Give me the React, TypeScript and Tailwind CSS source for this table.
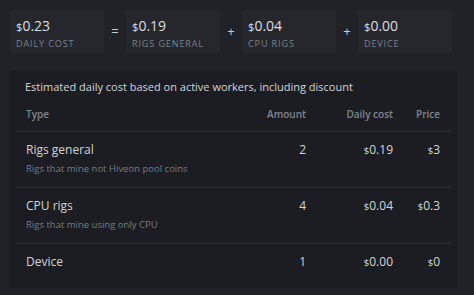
import React from 'react';

const font = { fontFamily: '"Open Sans", "Liberation Sans", sans-serif' };

const Money = ({ value }: { value: string }) => (
  <span>
    <span className="text-[0.8em]">$</span>
    {value}
  </span>
);

const SummaryCard = ({ value, label }: { value: string; label: string }) => (
  <div className="w-[94px] h-[43px] bg-[#25272d] rounded-[2px] pl-[6px] pt-[7px]">
    <div className="text-[14px] leading-[18px] text-[#dcdde0]">
      <Money value={value} />
    </div>
    <div className="text-[9px] leading-[13px] tracking-[0.9px] text-[#7b808a] mt-[1px] uppercase">{label}</div>
  </div>
);

const Sep = ({ sign }: { sign: string }) => (
  <div className="w-[22px] text-center text-[13px] text-[#c9cbcf]">{sign}</div>
);

const rows = [
  { type: 'Rigs general', desc: 'Rigs that mine not Hiveon pool coins', amount: '2', cost: '0.19', price: '3' },
  { type: 'CPU rigs', desc: 'Rigs that mine using only CPU', amount: '4', cost: '0.04', price: '0.3' },
  { type: 'Device', desc: '', amount: '1', cost: '0.00', price: '0' },
];

export default function App() {
  return (
    <div className="w-[474px] h-[295px] bg-[#202227] p-[10px] overflow-hidden" style={font}>
      <div className="flex items-center">
        <SummaryCard value="0.23" label="Daily cost" />
        <Sep sign="=" />
        <SummaryCard value="0.19" label="Rigs general" />
        <Sep sign="+" />
        <SummaryCard value="0.04" label="CPU rigs" />
        <Sep sign="+" />
        <SummaryCard value="0.00" label="Device" />
      </div>

      <div className="mt-[17px] w-[447px] h-[218px] bg-[#1b1d22] px-[6px] pt-[8px]">
        <div className="pl-[9px] text-[11px] leading-[18px] text-[#d3d4d7]">
          Estimated daily cost based on active workers, including discount
        </div>

        <div className="mt-[9px] grid grid-cols-[1fr_80px_87px_47px] text-[10px] font-semibold text-[#80858e] leading-[18px] pb-[8px] border-b border-[#2c2f35]">
          <div className="pl-[10px]">Type</div>
          <div className="text-right pr-[11px]">Amount</div>
          <div className="text-right pr-[11px]">Daily cost</div>
          <div className="text-right pr-[11px]">Price</div>
        </div>

        {rows.map((r, i) => (
          <div
            key={r.type}
            className={
              'grid grid-cols-[1fr_80px_87px_47px] text-[12px] leading-[18px] text-[#d3d4d7] pt-[9px] ' +
              (i < rows.length - 1 ? 'h-[56px] border-b border-[#2c2f35]' : '')
            }
          >
            <div className="pl-[10px]">
              <div>{r.type}</div>
              {r.desc && <div className="text-[9.5px] text-[#767b84] leading-[19px]">{r.desc}</div>}
            </div>
            <div className="text-right pr-[11px]">{r.amount}</div>
            <div className="text-right pr-[11px]">
              <Money value={r.cost} />
            </div>
            <div className="text-right pr-[11px]">
              <Money value={r.price} />
            </div>
          </div>
        ))}
      </div>
    </div>
  );
}
